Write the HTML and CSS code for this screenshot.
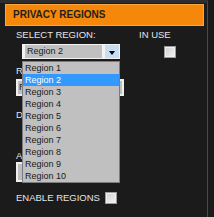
FILE: index.html
```html
<!DOCTYPE html>
<html lang="en">
<head>
  <meta charset="UTF-8" />
  <title>Privacy Regions</title>
  <link rel="stylesheet" href="styles.css">
</head>
<body>

  <div class="panel">
    <div class="header">PRIVACY REGIONS</div>

    <div class="row labels">
      <span class="lbl select-lbl">SELECT REGION:</span>
      <span class="lbl">IN USE</span>
    </div>

    <div class="row controls">
      <div class="select">
        <div class="select-value">Region 2</div>
        <div class="select-btn"><span class="arrow"></span></div>
      </div>
      <span class="check in-use"></span>
    </div>

    <div class="lbl field-lbl">REGION NAME:</div>
    <div class="field">Region 2</div>

    <div class="lbl field-lbl draw-lbl">DRAW REGION</div>

    <div class="lbl field-lbl area-lbl">AREA:</div>
    <div class="field tall"></div>

    <div class="enable">
      <span class="lbl">ENABLE REGIONS</span>
      <span class="check"></span>
    </div>

    <!-- open dropdown list -->
    <ul class="dropdown">
      <li>Region 1</li>
      <li class="active">Region 2</li>
      <li>Region 3</li>
      <li>Region 4</li>
      <li>Region 5</li>
      <li>Region 6</li>
      <li>Region 7</li>
      <li>Region 8</li>
      <li>Region 9</li>
      <li>Region 10</li>
    </ul>
  </div>

</body>
</html>
```

FILE: styles.css
```css
body {
  margin: 0;
  background: #1b1b1b;
  font-family: "Liberation Sans", Arial, sans-serif;
}
.panel {
  position: relative;
  width: 207px;
  height: 214px;
  border-top: 3px solid #2e2e2e;
  border-right: 1px solid #4a4a4a;
  box-sizing: content-box;
}
.header {
  margin: 1px 0 0 5px;
  width: 199px;
  height: 22px;
  box-sizing: border-box;
  background: #f5880a;
  border: 1px solid #fba640;
  color: #1e1e1e;
  font-size: 10px;
  font-weight: bold;
  line-height: 20px;
  padding-left: 7px;
}
.lbl {
  color: #e4e4e4;
  font-size: 9.5px;
  line-height: 13px;
  white-space: nowrap;
}
.row {
  display: flex;
  align-items: center;
}
.labels {
  margin-top: 2px;
  height: 13px;
  padding-left: 16px;
}
.select-lbl {
  width: 123px;
}
.controls {
  margin-top: 3px;
  height: 15px;
  padding-left: 22px;
}
.select {
  display: flex;
  width: 98px;
  height: 15px;
  box-sizing: border-box;
  background: #f2f2f2;
  padding: 1px 1px 1px 3px;
}
.select-value {
  flex: 1;
  background: #c0c0c0;
  color: #1a1a1a;
  font-size: 9px;
  line-height: 13px;
  padding-left: 2px;
}
.select-btn {
  width: 14px;
  margin-left: 3px;
  background: #c6ddf2;
  display: flex;
  align-items: center;
  justify-content: center;
}
.arrow {
  width: 0;
  height: 0;
  border-left: 3.5px solid transparent;
  border-right: 3.5px solid transparent;
  border-top: 4px solid #000;
  margin-top: 2px;
}
.check {
  display: inline-block;
  width: 12px;
  height: 12px;
  box-sizing: border-box;
  border: 1px solid #9a9a9a;
  background: linear-gradient(135deg, #cfcfcf, #f4f4f4);
  box-shadow: inset 0 0 0 1px #f0f0f0;
}
.in-use {
  margin-left: 44px;
}
.field-lbl {
  display: block;
  margin: 5px 0 0 16px;
  height: 13px;
}
.field {
  margin: 2px 0 0 16px;
  width: 108px;
  height: 17px;
  box-sizing: border-box;
  border: 2px solid #efefef;
  background: #bdbdbd;
  color: #1a1a1a;
  font-size: 9px;
  line-height: 13px;
  padding-left: 1px;
}
.draw-lbl {
  margin-top: 12px;
}
.area-lbl {
  margin-top: 28px;
}
.field.tall {
  margin-top: 0;
  width: 104px;
  height: 20px;
}
.enable {
  display: flex;
  align-items: center;
  gap: 5px;
  margin: 9px 0 0 16px;
  height: 13px;
}
.dropdown {
  position: absolute;
  left: 22px;
  top: 58px;
  width: 98px;
  margin: 0;
  padding: 0;
  list-style: none;
  box-sizing: border-box;
  background: #c0c0c0;
  border: 1px solid #7c7c7c;
}
.dropdown li {
  height: 12px;
  line-height: 12px;
  font-size: 9px;
  color: #1a1a1a;
  padding-left: 2px;
}
.dropdown li.active {
  background: #3399ff;
  color: #fff;
}
```
